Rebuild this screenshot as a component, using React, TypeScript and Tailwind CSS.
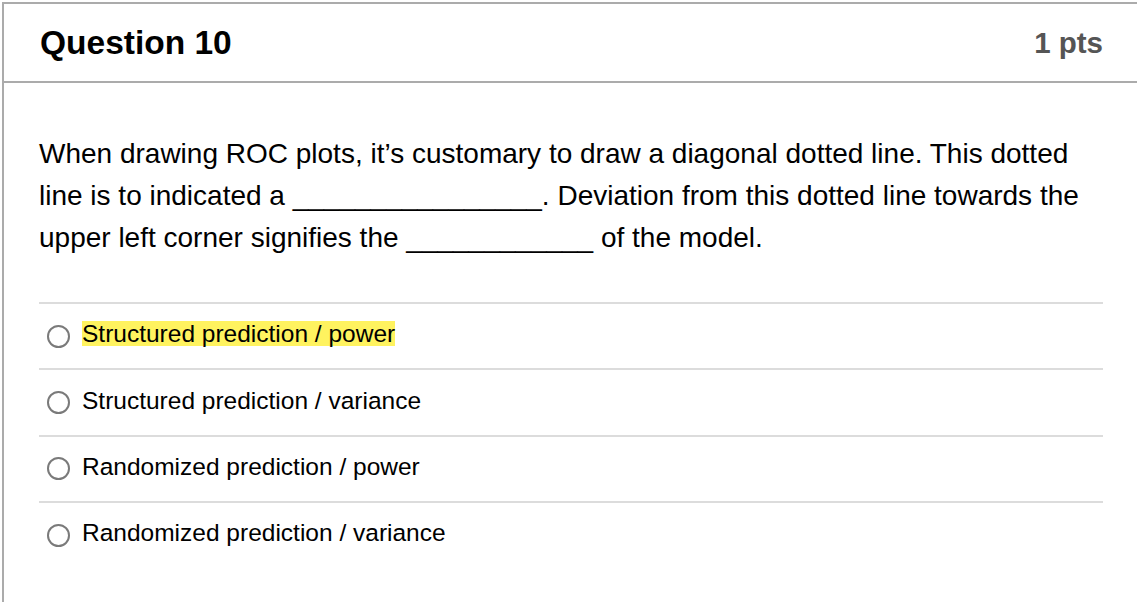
import React from "react";

const options = [
  { label: "Structured prediction / power", highlight: true },
  { label: "Structured prediction / variance", highlight: false },
  { label: "Randomized prediction / power", highlight: false },
  { label: "Randomized prediction / variance", highlight: false },
];

function Radio() {
  return (
    <span className="ml-[8px] mr-[12px] inline-block h-[23px] w-[23px] shrink-0 rounded-full border-[2px] border-[#7a7a7a] bg-white" />
  );
}

export default function App() {
  return (
    <div className="min-h-screen bg-white pt-[2px] pl-[2px] overflow-hidden" style={{ fontFamily: '"Liberation Sans", Arial, sans-serif' }}>
      <div className="w-[1160px] border-t-2 border-l-2 border-[#ababab] min-h-[600px]">
        {/* header */}
        <div className="flex h-[79px] items-center border-b-2 border-[#ababab] pl-[36px]">
          <div className="w-[1063px] flex items-center justify-between">
            <h2 className="text-[33.5px] font-bold leading-none text-black">Question 10</h2>
            <span className="text-[29.5px] font-bold leading-none text-[#555]">1 pts</span>
          </div>
        </div>

        {/* body */}
        <div className="pl-[35px] pt-[50px]">
          <div className="w-[1064px]">
            <p className="text-[28px] leading-[42px] text-black">
              When drawing ROC plots, it’s customary to draw a diagonal dotted line. This dotted
              line is to indicated a ________________. Deviation from this dotted line towards the
              upper left corner signifies the ____________ of the model.
            </p>

            <div className="mt-[43px]">
              {options.map((o) => (
                <label key={o.label} className="flex h-[66.4px] items-center border-t-2 border-[#dcdcdc] cursor-pointer">
                  <Radio />
                  <span className={"mb-[5px] text-[24.5px] leading-[25px] text-black " + (o.highlight ? "bg-[#fff35f]" : "")}>
                    {o.label}
                  </span>
                </label>
              ))}
            </div>
          </div>
        </div>
      </div>
    </div>
  );
}
